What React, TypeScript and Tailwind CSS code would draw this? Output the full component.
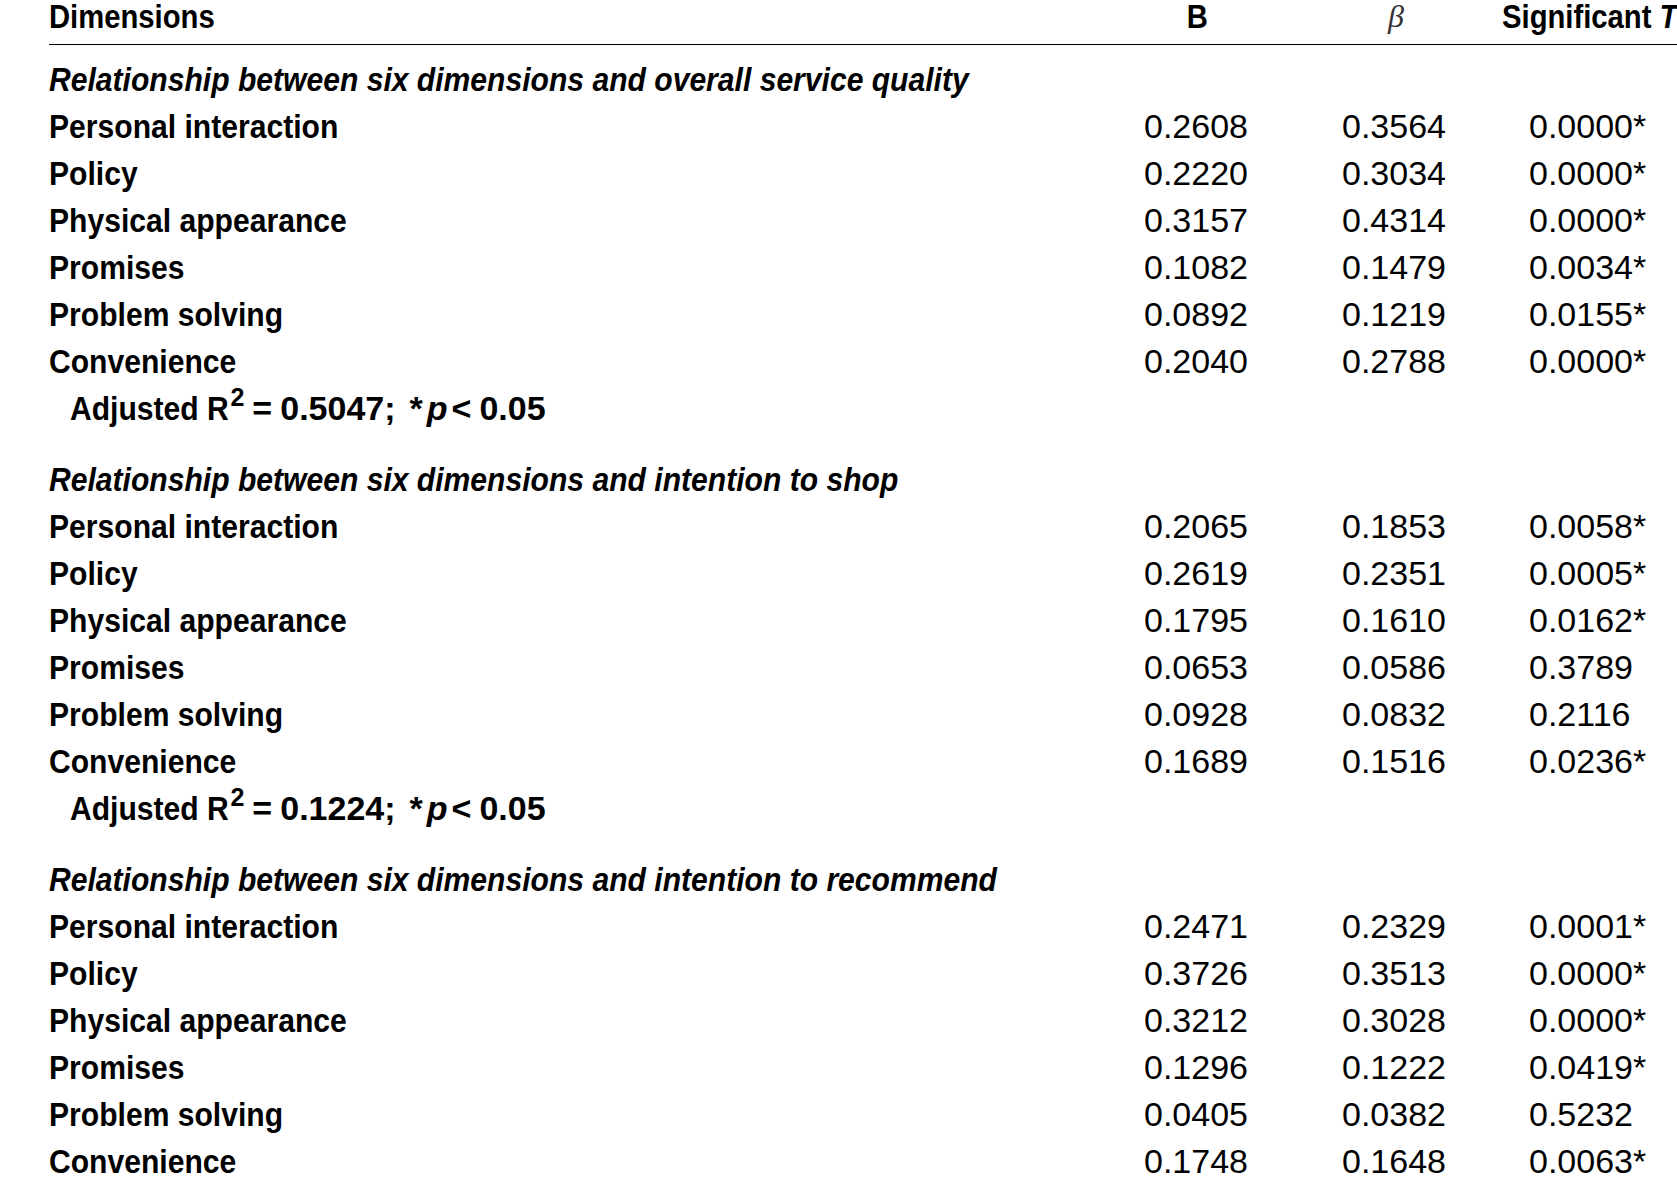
import React from "react";

type Row = { label: string; b: string; beta: string; sig: string };

const sections: { title: string; rows: Row[]; adj: string }[] = [
  {
    title: "Relationship between six dimensions and overall service quality",
    rows: [
      { label: "Personal interaction", b: "0.2608", beta: "0.3564", sig: "0.0000*" },
      { label: "Policy", b: "0.2220", beta: "0.3034", sig: "0.0000*" },
      { label: "Physical appearance", b: "0.3157", beta: "0.4314", sig: "0.0000*" },
      { label: "Promises", b: "0.1082", beta: "0.1479", sig: "0.0034*" },
      { label: "Problem solving", b: "0.0892", beta: "0.1219", sig: "0.0155*" },
      { label: "Convenience", b: "0.2040", beta: "0.2788", sig: "0.0000*" },
    ],
    adj: "0.5047",
  },
  {
    title: "Relationship between six dimensions and intention to shop",
    rows: [
      { label: "Personal interaction", b: "0.2065", beta: "0.1853", sig: "0.0058*" },
      { label: "Policy", b: "0.2619", beta: "0.2351", sig: "0.0005*" },
      { label: "Physical appearance", b: "0.1795", beta: "0.1610", sig: "0.0162*" },
      { label: "Promises", b: "0.0653", beta: "0.0586", sig: "0.3789" },
      { label: "Problem solving", b: "0.0928", beta: "0.0832", sig: "0.2116" },
      { label: "Convenience", b: "0.1689", beta: "0.1516", sig: "0.0236*" },
    ],
    adj: "0.1224",
  },
  {
    title: "Relationship between six dimensions and intention to recommend",
    rows: [
      { label: "Personal interaction", b: "0.2471", beta: "0.2329", sig: "0.0001*" },
      { label: "Policy", b: "0.3726", beta: "0.3513", sig: "0.0000*" },
      { label: "Physical appearance", b: "0.3212", beta: "0.3028", sig: "0.0000*" },
      { label: "Promises", b: "0.1296", beta: "0.1222", sig: "0.0419*" },
      { label: "Problem solving", b: "0.0405", beta: "0.0382", sig: "0.5232" },
      { label: "Convenience", b: "0.1748", beta: "0.1648", sig: "0.0063*" },
    ],
    adj: "",
  },
];

const labelFont = "font-['Liberation_Sans',Arial,sans-serif] font-bold text-[34px]";
const numFont = "font-['Liberation_Sans',Arial,sans-serif] text-[34px] font-normal";
const grid = "grid grid-cols-[1095px_198px_187px_1fr] items-start";

function Cond({ children, center, head }: { children: React.ReactNode; center?: boolean; head?: boolean }) {
  return (
    <span
      className={`inline-block whitespace-nowrap ${head ? "scale-x-[0.86]" : "scale-x-[0.885]"} ${
        center ? "origin-center" : "origin-left"
      }`}
    >
      {children}
    </span>
  );
}

export default function App() {
  return (
    <div className="w-[1677px] h-[1182px] overflow-hidden bg-white text-black">
      <div className="pl-[49px]">
        {/* header */}
        <div className={`${grid} leading-[32px] pb-[12px] border-b-[1.5px] border-black`}>
          <div className={labelFont}>
            <Cond head>Dimensions</Cond>
          </div>
          <div className={`${labelFont} w-[106px] text-center`}>
            <Cond center head>
              B
            </Cond>
          </div>
          <div className="w-[108px] text-center font-['Liberation_Serif',serif] italic text-[32px] font-normal text-[#333]">
            β
          </div>
          <div className={`${labelFont} ml-[-27px] whitespace-nowrap`}>
            <Cond head>
              Significant <span className="italic">T</span>
            </Cond>
          </div>
        </div>

        {sections.map((s, si) => (
          <div key={si} className={si === 0 ? "mt-[11px]" : "mt-[24px]"}>
            <div className={`${labelFont} italic leading-[47px] h-[47px]`}>
              <Cond>{s.title}</Cond>
            </div>
            {s.rows.map((r, ri) => (
              <div key={ri} className={`${grid} h-[47px] leading-[47px]`}>
                <div className={labelFont}>
                  <Cond>{r.label}</Cond>
                </div>
                <div className={numFont}>{r.b}</div>
                <div className={numFont}>{r.beta}</div>
                <div className={`${numFont} whitespace-nowrap`}>{r.sig}</div>
              </div>
            ))}
            {s.adj && (
              <div className={`${labelFont} leading-[47px] h-[47px] pl-[21px] whitespace-nowrap`}>
                <Cond>Adjusted R</Cond>
                <span className="ml-[-20px]">
                  <sup className="text-[25px] top-[-14px] ml-[1px]">2</sup>
                  <span className="ml-[8px]">=</span>
                  <span className="ml-[8px]">{s.adj};</span>
                  <span className="ml-[14px]">*</span>
                  <span className="italic ml-[4px]">p</span>
                  <span className="ml-[4px]">&lt;</span>
                  <span className="ml-[8px]">0.05</span>
                </span>
              </div>
            )}
          </div>
        ))}
      </div>
    </div>
  );
}
